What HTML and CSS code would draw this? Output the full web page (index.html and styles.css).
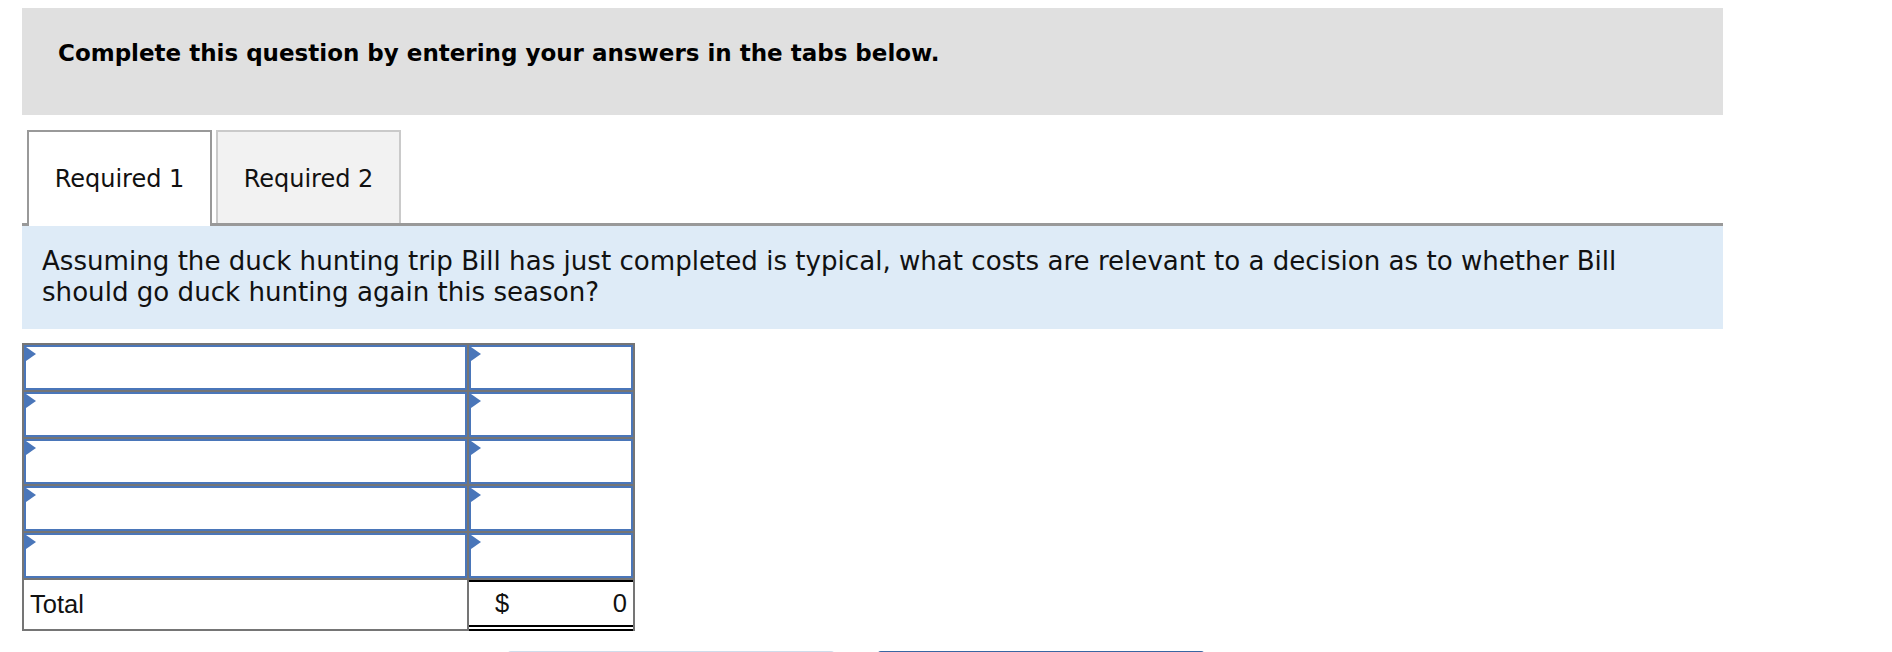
FILE: index.html
```html
<!DOCTYPE html>
<html lang="en">
<head>
<meta charset="utf-8">
<title>Complete this question</title>
<link rel="stylesheet" href="styles.css">
</head>
<body>
  <div class="instructions">
    <p class="instructions-text">Complete this question by entering your answers in the tabs below.</p>
  </div>

  <div class="tabs">
    <div class="tab active">Required 1</div>
    <div class="tab">Required 2</div>
  </div>

  <div class="prompt">
    <p class="prompt-text">Assuming the duck hunting trip Bill has just completed is typical, what costs are relevant to a decision as to whether Bill should go duck hunting again this season?</p>
  </div>

  <div class="answer-grid">
    <div class="cell"></div>
    <div class="cell"></div>
    <div class="cell"></div>
    <div class="cell"></div>
    <div class="cell"></div>
    <div class="cell"></div>
    <div class="cell"></div>
    <div class="cell"></div>
    <div class="cell"></div>
    <div class="cell"></div>
    <div class="total-label">Total</div>
    <div class="total-amount"><span>$</span><span>0</span></div>
  </div>

  <div class="nav">
    <button class="nav-btn prev" aria-label="Required 1"></button>
    <button class="nav-btn next" aria-label="Required 2"></button>
  </div>
</body>
</html>
```

FILE: styles.css
```css
html {
  overflow: hidden;
}

body {
  margin: 0;
  background: #fff;
  color: #000;
  font-family: "DejaVu Sans", Verdana, sans-serif;
}

.instructions {
  margin: 8px 0 0 22px;
  width: 1701px;
  height: 107px;
  box-sizing: border-box;
  background: #e0e0e0;
  padding: 31px 0 0 36px;
}

.instructions-text {
  margin: 0;
  font-weight: bold;
  font-size: 23px;
  line-height: 28px;
}

.tabs {
  display: flex;
  align-items: flex-end;
  gap: 4px;
  margin: 15px 0 0 22px;
  width: 1701px;
  box-sizing: border-box;
  padding-left: 5px;
  border-bottom: 3px solid #999;
}

.tab {
  width: 185px;
  height: 93px;
  box-sizing: border-box;
  border: 2px solid #cacaca;
  border-bottom: none;
  background: #f2f2f2;
  text-align: center;
  padding-top: 34px;
  font-size: 24px;
  line-height: 27px;
  color: #111;
}

.tab.active {
  height: 96px;
  margin-bottom: -3px;
  background: #fff;
  border-color: #999;
}

.prompt {
  margin-left: 22px;
  width: 1701px;
  box-sizing: border-box;
  background: #deebf7;
  padding: 20px 20px 21px 20px;
}

.prompt-text {
  margin: 0;
  max-width: 1620px;
  font-size: 26.1px;
  line-height: 31px;
  color: #111;
}

.answer-grid {
  display: grid;
  grid-template-columns: 443px 164px;
  gap: 2px;
  padding: 2px;
  background: #757575;
  width: fit-content;
  margin: 14px 0 0 22px;
}

.cell {
  position: relative;
  height: 45px;
  box-sizing: border-box;
  border: 2px solid #4a76b9;
  background: #fff;
}

.cell::before {
  content: "";
  position: absolute;
  top: 0;
  left: 0;
  border-left: 10px solid #4a76b9;
  border-top: 7px solid transparent;
  border-bottom: 7px solid transparent;
}

.total-label,
.total-amount {
  height: 49px;
  box-sizing: border-box;
  background: #fff;
  font-family: "Liberation Sans", Arial, sans-serif;
  font-size: 25.5px;
  color: #111;
  display: flex;
  align-items: center;
}

.total-label {
  padding-left: 6px;
}

.total-amount {
  height: 51px;
  justify-content: space-between;
  padding: 0 6px 0 26px;
  border-top: 2px solid #000;
  border-bottom: 6px double #000;
  margin-bottom: -2px;
}

.nav {
  display: flex;
  gap: 40px;
  padding-left: 506px;
  margin-top: 20px;
}

.nav-btn {
  width: 330px;
  height: 50px;
  box-sizing: border-box;
  border-radius: 5px;
}

.nav-btn.prev {
  background: #dce7f3;
  border: 1px solid #cfdceb;
}

.nav-btn.next {
  background: #3f6dab;
  border: 1px solid #3a66a2;
}
```
